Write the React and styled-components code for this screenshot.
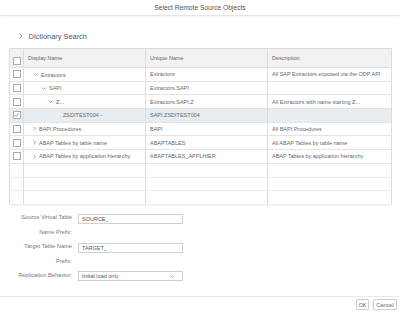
import React from 'react'
import styled, { createGlobalStyle } from 'styled-components'

const GlobalStyle = createGlobalStyle`
  html, body {
    margin: 0;
    padding: 0;
    background: #fff;
  }
  body {
    font-family: "Liberation Sans", Arial, sans-serif;
    color: #666;
  }
`

const Dialog = styled.div`
  width: 400px;
  height: 312px;
  display: flex;
  flex-direction: column;
  background: #fff;
  overflow: hidden;
`

const TitleBar = styled.header`
  height: 15px;
  flex: none;
  display: flex;
  align-items: center;
  justify-content: center;
  font-size: 6.7px;
  color: #555;
  border-bottom: 1px solid #e6e6e6;
  box-shadow: 0 1px 2px rgba(0, 0, 0, 0.05);
`

const Content = styled.main`
  flex: 1;
  padding: 0 8px 0 9px;
  display: flex;
  flex-direction: column;
`

const Section = styled.div`
  height: 16px;
  margin-top: 12px;
  display: flex;
  align-items: center;
  gap: 6px;
  padding-left: 10px;
  font-size: 7.4px;
  color: #555;
`

const Table = styled.table`
  margin-top: 4px;
  width: 383px;
  border-collapse: collapse;
  table-layout: fixed;
  font-size: 5.5px;
  color: #666;
  border: 1px solid #dcdcdc;
  box-shadow: 0 1px 1px rgba(0, 0, 0, 0.04);
`

const Head = styled.th`
  height: 18px;
  background: #f2f2f2;
  font-weight: normal;
  text-align: left;
  padding: 0 0 0 4px;
  border-right: 1px solid #dcdcdc;
  border-bottom: 1px solid #dcdcdc;
  color: #666;
  &:last-child { border-right: none; }
`

const Row = styled.tr`
  height: 13.7px;
  background: ${p => (p.$selected ? '#e8edf2' : '#fff')};
`

const Cell = styled.td`
  padding: 0 0 0 ${p => p.$indent || 4}px;
  border-right: 1px solid #dcdcdc;
  border-bottom: 1px solid ${p => (p.$empty ? '#ececec' : '#e3e3e3')};
  white-space: nowrap;
  overflow: hidden;
  &:last-child { border-right: none; }
`

const CheckCell = styled.td`
  padding: 0;
  border-right: 1px solid #dcdcdc;
  border-bottom: 1px solid ${p => (p.$empty ? '#ececec' : '#e3e3e3')};
  text-align: center;
  background: ${p => (p.$head ? '#f2f2f2' : 'transparent')};
  vertical-align: ${p => (p.$head ? 'bottom' : 'middle')};
  padding-bottom: ${p => (p.$head ? '2px' : '0')};
`

const Box = styled.span`
  display: inline-flex;
  align-items: center;
  justify-content: center;
  width: 6px;
  height: 6px;
  border: 1px solid #aaa;
  background: #fff;
  vertical-align: middle;
`

const Tree = styled.span`
  display: inline-flex;
  align-items: center;
  gap: 3px;
`

const Form = styled.div`
  margin-top: 9px;
  display: grid;
  grid-template-columns: 63px 105px;
  column-gap: 6px;
  row-gap: 2.2px;
  align-items: start;
`

const Label = styled.div`
  margin-top: -3.5px;
  text-align: right;
  font-size: 5.7px;
  line-height: 15px;
  color: #777;
`

const Input = styled.div`
  height: 10px;
  border: 1px solid #cfcfcf;
  box-sizing: border-box;
  display: flex;
  align-items: center;
  justify-content: space-between;
  padding: 0 7px 0 3px;
  font-size: 5.5px;
  color: #555;
  background: #fff;
`

const Footer = styled.footer`
  height: 15px;
  flex: none;
  border-top: 1px solid #e8e8e8;
  display: flex;
  align-items: center;
  justify-content: flex-end;
  gap: 4px;
  padding-right: 3px;
`

const Button = styled.button`
  height: 11px;
  width: ${p => p.$w}px;
  padding: 0;
  border: 1px solid #cfcfcf;
  background: #fff;
  font-family: inherit;
  font-size: 5.6px;
  color: #666;
  border-radius: 1px;
`

const Chevron = ({ dir = 'down', size = 5 }) =>
  dir === 'down' ? (
    <svg width={size} height={size * 0.6} viewBox="0 0 10 6">
      <path d="M1 1l4 4 4-4" fill="none" stroke="#777" strokeWidth="1.3" />
    </svg>
  ) : (
    <svg width={size * 0.6} height={size} viewBox="0 0 6 10">
      <path d="M1 1l4 4-4 4" fill="none" stroke="#777" strokeWidth="1.3" />
    </svg>
  )

const Check = ({ checked }) => (
  <Box>
    {checked && (
      <svg width="5" height="4" viewBox="0 0 10 8">
        <path d="M1 4l3 3 5-6" fill="none" stroke="#6a7f99" strokeWidth="1.6" />
      </svg>
    )}
  </Box>
)

const rows = [
  { name: 'Extractors', indent: 9, icon: 'down', unique: 'Extractors', desc: 'All SAP Extractors exposed via the ODP API' },
  { name: 'SAPI', indent: 17, icon: 'down', unique: 'Extractors.SAPI', desc: '' },
  { name: 'Z...', indent: 24, icon: 'down', unique: 'Extractors.SAPI.Z', desc: 'All Extractors with name starting Z...' },
  { name: 'ZSDITEST004 -', indent: 39, unique: 'SAPI.ZSDITEST004', desc: '', selected: true, checked: true },
  { name: 'BAPI Procedures', indent: 9, icon: 'right', unique: 'BAPI', desc: 'All BAPI Procedures' },
  { name: 'ABAP Tables by table name', indent: 9, icon: 'right', unique: 'ABAPTABLES', desc: 'All ABAP Tables by table name' },
  { name: 'ABAP Tables by application hierarchy', indent: 9, icon: 'right', unique: 'ABAPTABLES_APPLHIER', desc: 'ABAP Tables by application hierarchy' },
]

export default function App() {
  return (
    <Dialog>
      <GlobalStyle />
      <TitleBar>Select Remote Source Objects</TitleBar>
      <Content>
        <Section>
          <Chevron dir="right" size={6} />
          Dictionary Search
        </Section>
        <Table>
          <colgroup>
            <col style={{ width: 14 }} />
            <col style={{ width: 122 }} />
            <col style={{ width: 122 }} />
            <col />
          </colgroup>
          <thead>
            <tr>
              <CheckCell as="th" $head>
                <Check />
              </CheckCell>
              <Head>Display Name</Head>
              <Head>Unique Name</Head>
              <Head>Description</Head>
            </tr>
          </thead>
          <tbody>
            {rows.map(r => (
              <Row key={r.unique} $selected={r.selected}>
                <CheckCell>
                  <Check checked={r.checked} />
                </CheckCell>
                <Cell $indent={r.indent}>
                  <Tree>
                    {r.icon && <Chevron dir={r.icon} size={5} />}
                    {r.name}
                  </Tree>
                </Cell>
                <Cell>{r.unique}</Cell>
                <Cell>{r.desc}</Cell>
              </Row>
            ))}
            {[0, 1, 2].map(i => (
              <Row key={'e' + i}>
                <CheckCell $empty />
                <Cell $empty />
                <Cell $empty />
                <Cell $empty />
              </Row>
            ))}
          </tbody>
        </Table>
        <Form>
          <Label>
            Source Virtual Table
            <br />
            Name Prefix:
          </Label>
          <Input>SOURCE_</Input>
          <Label>
            Target Table Name
            <br />
            Prefix:
          </Label>
          <Input>TARGET_</Input>
          <Label>Replication Behavior:</Label>
          <Input>
            Initial load only
            <Chevron size={5} />
          </Input>
        </Form>
      </Content>
      <Footer>
        <Button $w={13}>OK</Button>
        <Button $w={24}>Cancel</Button>
      </Footer>
    </Dialog>
  )
}
